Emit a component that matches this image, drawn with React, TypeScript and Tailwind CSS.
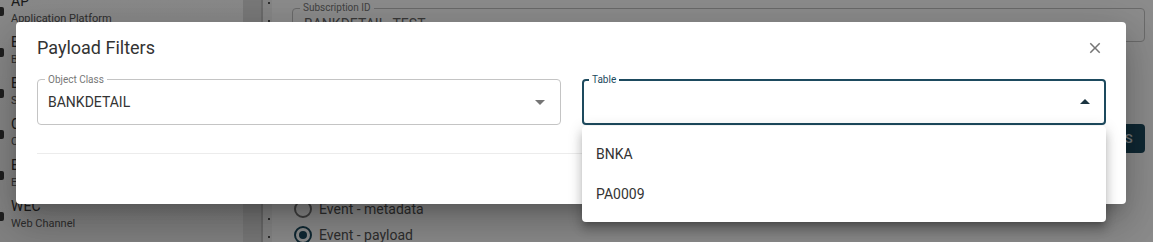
import { Fragment } from "react";

type NavItem = { code: string; name: string };

const nav: NavItem[] = [
  { code: "AP", name: "Application Platform" },
  { code: "EBP", name: "Business Partner" },
  { code: "ECC", name: "SAP ECC" },
  { code: "CRM", name: "Customer Relationship" },
  { code: "EWM", name: "Extended Warehouse" },
  { code: "WEC", name: "Web Channel" },
];

const tables = ["BNKA", "PA0009"];

const ArrowDown = ({ color }: { color: string }) => (
  <svg width="24" height="24" viewBox="0 0 24 24" fill={color}>
    <path d="M7 10l5 5 5-5z" />
  </svg>
);

const ArrowUp = ({ color }: { color: string }) => (
  <svg width="24" height="24" viewBox="0 0 24 24" fill={color}>
    <path d="M7 14l5-5 5 5z" />
  </svg>
);

export default function App() {
  return (
    <div className="relative h-[242px] w-[1153px] overflow-hidden bg-white font-['Roboto',sans-serif]">
      {/* page behind the dialog */}
      <div className="flex h-full">
        <aside className="w-[243px] shrink-0 bg-gradient-to-b from-[#fbfbfb] to-[#eeeeee]">
          <div className="-mt-[12px] flex flex-col">
            {nav.map((n) => (
              <div key={n.code} className="flex h-[41px] items-center">
                <div className="-ml-[5px] mt-[6px] h-[9px] w-[9px] rounded-[2px] bg-[#3a3a3a]" />
                <div className="ml-[7px] flex flex-col">
                  <span className="text-[14px] leading-[20px] text-[#333]">{n.code}</span>
                  <span className="text-[11px] leading-[16px] text-[#555]">{n.name}</span>
                </div>
              </div>
            ))}
          </div>
        </aside>
        <div className="w-[18px] shrink-0 bg-[#dcdcdc]" />
        <div className="w-[2px] shrink-0 bg-[#c4c4c4]" />
        <div className="flex w-[9px] shrink-0 flex-col items-center gap-[16px] bg-[#f4f4f4] pl-[2px] pt-[2px]">
          {Array.from({ length: 14 }).map((_, i) => (
            <div key={i} className="h-[2px] w-[2px] shrink-0 bg-[#555]" />
          ))}
        </div>
        <main className="flex-1 bg-white pl-[20px] pr-[8px] pt-[8px]">
          <div className="relative flex h-[34px] items-center rounded-[4px] border border-[#c4c4c4] pl-[11px]">
            <span className="absolute -top-[7px] left-[7px] bg-white px-[3px] text-[10px] leading-[12px] text-[#777]">
              Subscription ID
            </span>
            <span className="-mt-[2px] text-[14px] text-[#666]">BANKDETAIL_TEST</span>
          </div>
          <div className="mt-[82px] flex justify-end">
            <button className="h-[29px] rounded-[4px] bg-[#1d4a5e] px-[12px] text-[13px] font-medium tracking-wide text-white/80">
              APPLY FILTERS
            </button>
          </div>
          <div className="mt-[43px] flex flex-col">
            {[
              { label: "Event - metadata", checked: false },
              { label: "Event - payload", checked: true },
            ].map((r) => (
              <div key={r.label} className="flex h-[26px] items-center pl-[2px]">
                <div
                  className={
                    r.checked
                      ? "flex h-[18px] w-[18px] items-center justify-center rounded-full border-2 border-[#1d4a5e]"
                      : "h-[18px] w-[18px] rounded-full border-2 border-[#777]"
                  }
                >
                  {r.checked && <div className="h-[8px] w-[8px] rounded-full bg-[#1d4a5e]" />}
                </div>
                <span className="ml-[7px] text-[14px] text-[#555]">{r.label}</span>
              </div>
            ))}
          </div>
        </main>
      </div>

      {/* backdrop */}
      <div className="absolute inset-0 bg-black/[0.45]" />

      {/* dialog */}
      <div className="absolute left-[16px] top-[22px] h-[182px] w-[1110px] rounded-[4px] bg-white shadow-[0_11px_15px_-7px_rgba(0,0,0,0.2),0_24px_38px_3px_rgba(0,0,0,0.14),0_9px_46px_8px_rgba(0,0,0,0.12)]">
        <div className="flex items-center justify-between pl-[21px] pr-[22px] pt-[15px]">
          <h2 className="text-[18px] leading-[22px] text-[#333]">Payload Filters</h2>
          <button className="flex h-[18px] w-[18px] items-center justify-center">
            <svg width="18" height="18" viewBox="0 0 24 24" fill="#757575">
              <path d="M19 6.41 17.59 5 12 10.59 6.41 5 5 6.41 10.59 12 5 17.59 6.41 19 12 13.41 17.59 19 19 17.59 13.41 12z" />
            </svg>
          </button>
        </div>

        <div className="mt-[20px] grid grid-cols-2 gap-[21px] pl-[21px] pr-[20px]">
          <div className="relative flex h-[46px] items-center justify-between rounded-[4px] border border-[#c4c4c4] pl-[10px] pr-[8px]">
            <span className="absolute -top-[6px] left-[7px] bg-white px-[3px] text-[10px] leading-[12px] text-[#777]">
              Object Class
            </span>
            <span className="text-[14px] text-[#333]">BANKDETAIL</span>
            <ArrowDown color="#757575" />
          </div>

          <div className="relative flex h-[46px] items-center justify-end rounded-[4px] border-2 border-[#1d4a5e] pr-[7px]">
            <span className="absolute -top-[7px] left-[5px] bg-white px-[3px] text-[10px] leading-[12px] text-[#1d4a5e]">
              Table
            </span>
            <ArrowUp color="#1b3441" />

            <div className="absolute -left-[2px] -right-[2px] top-[calc(100%+3px)] z-10 rounded-[4px] bg-white py-2 shadow-[0_5px_5px_-3px_rgba(0,0,0,0.2),0_8px_10px_1px_rgba(0,0,0,0.14),0_3px_14px_2px_rgba(0,0,0,0.12)]">
              {tables.map((t) => (
                <Fragment key={t}>
                  <div className="flex h-10 items-center px-[14px] text-[14px] text-[#333]">{t}</div>
                </Fragment>
              ))}
            </div>
          </div>
        </div>

        <div className="ml-[21px] mr-[20px] mt-[28px] h-px bg-[#ececec]" />
      </div>
    </div>
  );
}
